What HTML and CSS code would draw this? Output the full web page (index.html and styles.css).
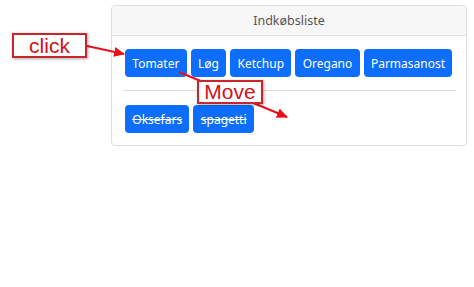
FILE: index.html
```html
<!DOCTYPE html>
<html lang="da">
<head>
    <meta charset="UTF-8">
    <meta name="viewport" content="width=device-width, initial-scale=1.0">
    <title>Indkøbsliste</title>
    <link rel="stylesheet" href="styles.css">
</head>
<body>

<div class="kort">
    <div class="kort-top">Indkøbsliste</div>
    <div class="kort-indhold">
        <div class="vare-liste">
            <button class="vare">Tomater</button>
            <button class="vare">Løg</button>
            <button class="vare">Ketchup</button>
            <button class="vare">Oregano</button>
            <button class="vare">Parmasanost</button>
        </div>
        <hr class="skille">
        <div class="vare-liste">
            <button class="vare købt">Oksefars</button>
            <button class="vare købt">spagetti</button>
        </div>
    </div>
</div>

<!-- annotationer lagt oven på skærmbilledet -->
<svg class="noter" width="474" height="287" viewBox="0 0 474 287">
    <defs>
        <marker id="pil" markerWidth="11" markerHeight="10" refX="10" refY="5" orient="auto" markerUnits="userSpaceOnUse">
            <path d="M0,0 L11,5 L0,10 Z" fill="#e8101a"/>
        </marker>
    </defs>
    <line x1="87" y1="46" x2="124" y2="54" stroke="#e8101a" stroke-width="2" marker-end="url(#pil)"/>
    <line x1="179" y1="72" x2="287" y2="117" stroke="#e8101a" stroke-width="2" marker-end="url(#pil)"/>
</svg>
<div class="note note-click">click</div>
<div class="note note-move">Move</div>

</body>
</html>
```

FILE: styles.css
```css
body {
    font-family: "Noto Sans", "Open Sans", sans-serif;
    margin: 0;
    padding: 5px 0 0 111px;
    background: #fff;
    position: relative;
    height: 287px;
    box-sizing: border-box;
    overflow: hidden;
}

.kort {
    width: 356px;
    border: 1px solid #dedede;
    border-radius: 4px;
    box-sizing: border-box;
    background: #fff;
}

.kort-top {
    height: 29px;
    line-height: 29px;
    text-align: center;
    font-size: 12.5px;
    color: #555;
    background: #f7f7f7;
    border-bottom: 1px solid #e2e2e2;
    border-radius: 4px 4px 0 0;
}

.kort-indhold {
    padding: 13px 10px 12px 13px;
}

.vare-liste {
    display: flex;
    gap: 4px;
}

.vare {
    font-family: inherit;
    font-size: 12px;
    height: 28px;
    padding: 0 7.3px;
    border: none;
    border-radius: 4px;
    background-color: #0d6efd;
    color: #fff;
    cursor: pointer;
}

.købt {
    text-decoration: line-through;
}

.skille {
    border: none;
    border-top: 1px solid #dcdcdc;
    margin: 13px 0 14px -2px;
}

.noter {
    position: absolute;
    left: 0;
    top: 0;
    pointer-events: none;
}

.note {
    position: absolute;
    box-sizing: border-box;
    background: #fff;
    border: 2px solid #c8262c;
    box-shadow: 1px 1px 3px rgba(0, 0, 0, 0.35);
    color: #d0121b;
    font-family: "Liberation Sans", Arial, sans-serif;
    font-size: 21px;
    text-align: center;
}

.note-click {
    left: 12px;
    top: 33px;
    width: 75px;
    height: 25px;
    line-height: 21px;
}

.note-move {
    left: 197px;
    top: 80px;
    width: 66px;
    height: 24px;
    line-height: 20px;
}
```
